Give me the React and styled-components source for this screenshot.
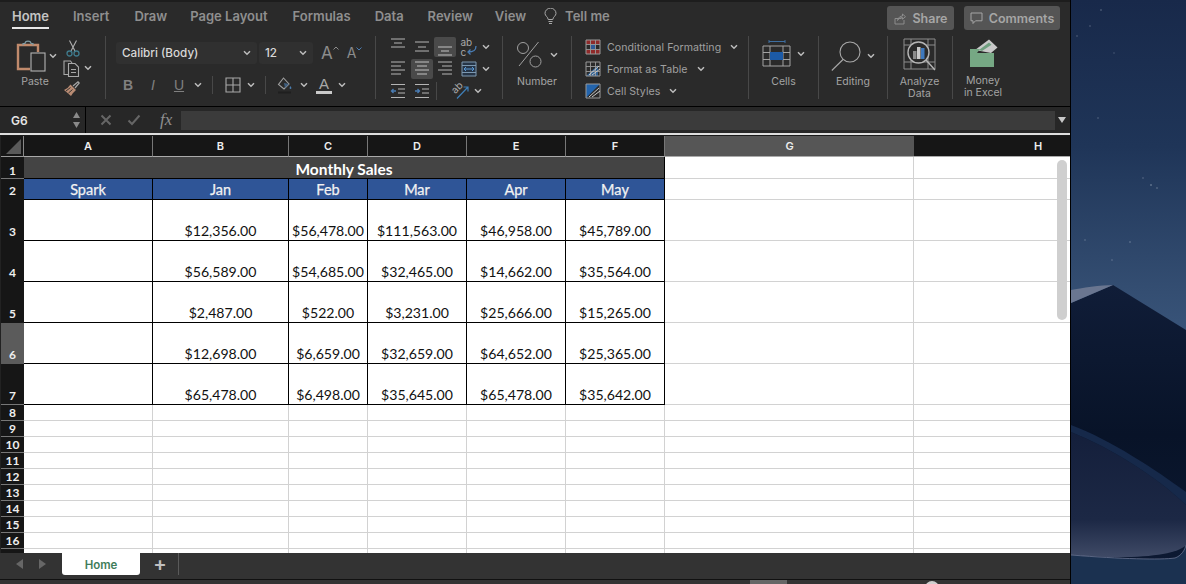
import React from "react";
import styled, { createGlobalStyle } from "styled-components";

const Global = createGlobalStyle`
  html, body { margin: 0; padding: 0; background: #0d1a30; overflow: hidden; }
  #root { width: 1186px; height: 584px; }
`;

const UI = `Inter, "Liberation Sans", sans-serif`;
const SHEET = `Lato, "Open Sans", sans-serif`;

const Screen = styled.div`display: flex; width: 1186px; height: 584px; overflow: hidden;`;
const ExcelWindow = styled.div`
  width: 1071px; height: 584px; flex: none; display: flex; flex-direction: column;
  border-right: 1px solid #000; box-sizing: border-box; background: #2a2a2a; font-family: ${UI};
`;
const Desktop = styled.div`flex: 1; height: 584px; line-height: 0;`;

const TabBar = styled.div`
  height: 33px; box-sizing: border-box; border-top: 2px solid #1d1d1d; flex: none;
  display: flex; align-items: flex-start; padding-left: 12px; position: relative;
`;
const Tab = styled.div`
  font-size: 13px; font-weight: 600; color: ${p => (p.$active ? "#c4c4c4" : "#8f8f8f")};
  margin-right: ${p => p.$gap || 25}px; height: 22px; line-height: 22px; margin-top: 3px;
  box-sizing: content-box; border-bottom: ${p => (p.$active ? "2px solid #e8e8e8" : "2px solid transparent")};
  white-space: nowrap;
`;
const TellMe = styled.div`
  display: flex; align-items: center; gap: 8px; font-size: 13px; font-weight: 600; color: #8f8f8f;
  height: 22px; margin-top: 3px;
`;
const ActionArea = styled.div`margin-left: auto; display: flex; gap: 10px; padding: 4px 10px 0 0;`;
const ActionButton = styled.div`
  height: 24px; width: ${p => p.$w}px; box-sizing: border-box; background: #555; border-radius: 3px;
  color: #a6a6a6; font-size: 12.5px; font-weight: 600; display: flex; align-items: center;
  justify-content: center; gap: 6px;
`;

const Ribbon = styled.div`
  height: 74px; box-sizing: border-box; flex: none; display: flex; padding: 3px 0 8px;
  border-bottom: 1px solid #000;
`;
const Group = styled.div`
  width: ${p => p.$w}px; flex: none; box-sizing: border-box; height: 63px;
  border-right: ${p => (p.$plain ? "none" : "1px solid #484848")};
  display: ${p => p.$flex || "block"};
  padding: ${p => p.$pad || 0};
`;
const LabelGroup = styled(Group)`
  display: flex; flex-direction: column; align-items: center; position: relative;
`;
const GroupIconRow = styled.div`
  display: flex; align-items: center; gap: ${p => p.$gap ?? 5}px; height: ${p => p.$h || 36}px;
  margin-top: ${p => p.$top ?? 3}px;
`;
const RibbonLabel = styled.div`
  color: #a4a4a4; font-size: 10.5px; line-height: 12px; text-align: center; margin-top: ${p => p.$top || 0}px;
`;
const PasteCol = styled.div`display: flex; flex-direction: column; align-items: center; width: 38px; margin-top: 4px;`;
const PasteTop = styled.div`display: flex; align-items: center; gap: 3px; height: 32px; margin-bottom: 4px; width: 38px;`;
const ToolCol = styled.div`display: flex; flex-direction: column; margin-left: 9px; margin-top: 2px;`;
const ToolRow = styled.div`display: flex; align-items: center; gap: 4px; height: 21px;`;

const FontRow = styled.div`display: flex; align-items: center; height: 22px; margin-top: ${p => p.$top}px;`;
const SelectBox = styled.div`
  width: ${p => p.$w}px; height: 22px; box-sizing: border-box; background: #303030; border-radius: 3px;
  margin-right: 2px; display: flex; align-items: center; justify-content: space-between;
  padding: 0 6px; color: #d8d8d8; font-size: 11.7px; font-weight: 500;
`;
const GrowLetter = styled.span`
  font-size: ${p => p.$s}px; color: #8c8c8c; line-height: 1; margin-left: ${p => p.$l}px; position: relative;
  & > svg { position: absolute; left: 100%; top: 1px; }
`;
const FormatLetter = styled.span`
  font-size: 14px; width: ${p => p.$w || 16}px; text-align: center; color: #808080;
  font-weight: ${p => (p.$b ? 700 : 400)}; font-style: ${p => (p.$i ? "italic" : "normal")};
  text-decoration: ${p => (p.$u ? "underline" : "none")}; margin-left: ${p => p.$l || 0}px;
  font-family: "Liberation Sans", sans-serif;
`;
const ColorGlyph = styled.span`
  width: 16px; height: 17px; box-sizing: border-box; text-align: center; font-size: 15px; line-height: 14px; color: #a8a8a8;
  border-bottom: 3.5px solid #c9c9c9; font-family: "Liberation Sans", sans-serif; flex: none;
`;
const FontSep = styled.div`width: 1px; height: 18px; background: #484848; margin: 0 ${p => p.$r || 12}px 0 ${p => p.$l || 10}px;`;
const Spacer = styled.div`width: ${p => p.$w}px; flex: none;`;

const AlignGrid = styled.div`
  display: grid; grid-template-columns: repeat(3, 22px) 1fr; column-gap: 1.5px; row-gap: 2px;
  grid-auto-rows: 20px; padding: 1px 0 0 11px;
`;
const AlignCell = styled.div`
  display: flex; align-items: center; justify-content: center; border-radius: 2px;
  background: ${p => (p.$on ? "#4a4a4a" : "transparent")};
`;
const WideCell = styled(AlignCell)`justify-content: flex-start; padding-left: 3px; gap: 5px;`;
const OrientCell = styled.div`
  grid-column: 3 / span 2; display: flex; align-items: center; gap: 4px; padding-left: 2px;
  & > b { width: 1px; height: 18px; background: #484848; margin-right: 10px; }
`;
const WrapGlyph = styled.div`
  width: 16px; height: 20px; flex: none; position: relative; font-size: 10px; line-height: 10px; color: #a8a8a8;
  & > span { display: block; }
  & > svg { position: absolute; left: 0; top: 0; }
`;
const OrientGlyph = styled.div`
  width: 19px; height: 18px; flex: none; position: relative;
  & > span { position: absolute; left: 0; top: 0; font-size: 10px; line-height: 11px; color: #a8a8a8; transform: rotate(-45deg); }
  & > svg { position: absolute; left: 0; top: 0; }
`;

const StyleRow = styled.div`
  display: flex; align-items: center; gap: 6px; height: 22px; color: #a0a0a0; font-size: 10.6px; letter-spacing: 0.05px;
  white-space: nowrap;
`;
const StyleRows = styled.div`padding: 0 0 0 13px;`;
const TextChevron = styled.span`display: inline-flex; margin-left: 3px;`;

const FormulaBar = styled.div`
  height: 26px; flex: none; box-sizing: border-box; background: #272727; display: flex; align-items: center;
`;
const NameBox = styled.div`
  width: 86px; height: 26px; box-sizing: border-box; padding: 0 4px 0 11px; flex: none;
  display: flex; align-items: center; justify-content: space-between;
  border-right: 1px solid #000; color: #e6e6e6; font-size: 12px; font-weight: 600;
`;
const FormulaTools = styled.div`
  display: flex; align-items: center; width: 95px; box-sizing: border-box; padding-left: 14px; gap: 15px; flex: none;
`;
const Fx = styled.span`font-family: "Liberation Serif", serif; font-style: italic; font-size: 17px; color: #8f8f8f; margin-left: 4px;`;
const FormulaInput = styled.div`width: 874px; height: 19px; background: #3b3b3b; flex: none;`;
const DropArrow = styled.div`
  width: 0; height: 0; margin-left: 3px; border-left: 4px solid transparent; border-right: 4px solid transparent;
  border-top: 6px solid #c8c8c8;
`;
const WhiteRule = styled.div`
  height: 3px; flex: none; background: #1a1a1a; border-top: 2px solid #dedede; box-sizing: border-box;
`;

const SheetWrap = styled.div`height: 417px; flex: none; overflow: hidden; position: relative; background: #fff;`;
const Grid = styled.div`
  display: grid; grid-template-columns: 23px 129px 136px 79px 99px 99px 99px 249px 248px;
  grid-template-rows: 21px 22px 21px repeat(5, 41px) repeat(10, 16px);
  border-left: 1px solid #222; width: max-content;
`;
const Corner = styled.div`
  background: #161616; border-right: 1px solid #888; border-bottom: 1px solid #999;
  position: relative; box-sizing: border-box;
  &::after { content: ""; position: absolute; right: 2px; bottom: 2px; width: 0; height: 0;
    border-left: 15px solid transparent; border-bottom: 15px solid #5a5a5a; }
`;
const ColHead = styled.div`
  background: ${p => (p.$on ? "#565656" : "#161616")}; color: #eee; box-sizing: border-box;
  font-size: 11px; font-weight: 600; display: flex; align-items: center; justify-content: center;
  border-right: ${p => (p.$none ? "none" : "1px solid #777")}; border-bottom: 1px solid #aaa;
`;
const RowHead = styled.div`
  background: ${p => (p.$on ? "#5b5b5b" : "#161616")}; color: #eee; box-sizing: border-box;
  font-family: ${SHEET}; font-size: 12px; font-weight: 700; display: flex; align-items: flex-end;
  justify-content: center; line-height: 14px;
  border-bottom: 1px solid ${p => (p.$line ? "#777" : "transparent")};
  padding-bottom: ${p => (p.$tall ? 1 : 0)}px;
`;
const Cell = styled.div`
  box-sizing: border-box; border-right: 1px solid #d2d2d2; border-bottom: 1px solid #d2d2d2; background: #fff;
`;
const TitleCell = styled.div`
  grid-column: span 6; background: #444; color: #fff; font-family: ${SHEET}; font-weight: 700; font-size: 15.5px;
  display: flex; align-items: center; justify-content: center; box-sizing: border-box; padding-top: 2px;
  border-right: 1px solid #000; border-bottom: 1px solid #000;
`;
const HeadCell = styled.div`
  background: #2f5597; color: #f2f2f2; font-family: ${SHEET}; font-size: 14.5px; -webkit-text-stroke: 0.25px #f2f2f2;
  display: flex; align-items: center; justify-content: center; box-sizing: border-box;
  border-right: 1px solid #000; border-bottom: 1px solid #000;
`;
const ValueCell = styled.div`
  background: #fff; color: #111; font-family: ${SHEET}; font-size: 14.1px; box-sizing: border-box;
  display: flex; align-items: flex-end; justify-content: center; line-height: 18px; white-space: nowrap;
  border-right: 1px solid #000; border-bottom: 1px solid #000;
`;
const ScrollThumb = styled.div`
  position: absolute; left: 1057px; top: 24px; width: 10px; height: 160px; background: #cfcfcf; border-radius: 5px;
`;

const SheetBar = styled.div`
  height: 26px; flex: none; background: #333; box-sizing: border-box; display: flex; align-items: flex-start;
`;
const NavArrows = styled.div`display: flex; align-items: center; gap: 16px; width: 62px; height: 22px; padding-left: 16px; box-sizing: border-box;`;
const Arrow = styled.div`
  width: 0; height: 0; border-top: 5px solid transparent; border-bottom: 5px solid transparent;
  ${p => (p.$left ? "border-right: 7px solid #666;" : "border-left: 7px solid #666;")}
`;
const SheetTab = styled.div`
  width: 78px; height: 22px; background: #fff; border-radius: 0 0 3px 3px; color: #3f7d5a; font-size: 11.5px;
  font-weight: 600; display: flex; align-items: center; justify-content: center; padding-top: 2px; box-sizing: border-box;
`;
const AddSheet = styled.div`
  width: 39px; height: 22px; box-sizing: border-box; border-right: 1px solid #5a5a5a; color: #c0c0c0; font-size: 20px;
  font-weight: 600; display: flex; align-items: center; justify-content: center; line-height: 1; padding-left: 2px;
`;
const StatusStrip = styled.div`
  flex: 1; background: #333; border-top: 1px solid #111; position: relative; min-height: 0; overflow: hidden;
`;
const ZoomChip = styled.div`position: absolute; left: 750px; top: 0; width: 37px; height: 4px; background: #666;`;
const ZoomKnob = styled.div`
  position: absolute; left: 925px; top: 1px; width: 14px; height: 14px; border-radius: 50%; background: #cfcfcf;
`;

const Chev = ({ c = "#bdbdbd" }) => (
  <svg width="8" height="6" viewBox="0 0 8 6" style={{ flex: "none" }}>
    <path d="M1 1.2 L4 4.2 L7 1.2" fill="none" stroke={c} strokeWidth="1.5" />
  </svg>
);
const Caret = ({ c, up }) => (
  <svg width="6" height="4" viewBox="0 0 6 4">
    <path d={up ? "M0.5 3.5L3 1L5.5 3.5" : "M0.5 0.5L3 3L5.5 0.5"} fill="none" stroke={c} strokeWidth="1" />
  </svg>
);

const Paste = () => (
  <svg width="30" height="32" viewBox="0 0 30 32" style={{ flex: "none" }}>
    <path d="M14 29H2V5H22V12" fill="none" stroke="#c08a6c" strokeWidth="2.4" />
    <path d="M7 5.5V3.5H9C9 0.3 15 0.3 15 3.5H17V5.5" fill="none" stroke="#7d9aa2" strokeWidth="1.1" />
    <rect x="15" y="13" width="14" height="18" fill="#2a2a2a" stroke="#b3b3b3" strokeWidth="1.1" />
  </svg>
);
const Scissors = () => (
  <svg width="14" height="17" viewBox="0 0 14 17" style={{ marginLeft: 3 }}>
    <path d="M3.5 0.5 L9 11 M10.5 0.5 L5 11" stroke="#b0b0b0" strokeWidth="1.1" fill="none" />
    <circle cx="3.5" cy="13.5" r="2.5" fill="none" stroke="#3f7a8c" strokeWidth="1.3" />
    <circle cx="10.5" cy="13.5" r="2.5" fill="none" stroke="#3f7a8c" strokeWidth="1.3" />
  </svg>
);
const Copy = () => (
  <svg width="17" height="17" viewBox="0 0 17 17">
    <path d="M5 14.5H1V1H7.5L9 3" fill="none" stroke="#a8a8a8" strokeWidth="1.1" />
    <path d="M5.5 3.5H12L15.5 7V16.5H5.5Z" fill="#2a2a2a" stroke="#a8a8a8" strokeWidth="1.1" />
    <path d="M8 9.5H13M8 12.5H13" stroke="#a8a8a8" strokeWidth="1" />
  </svg>
);
const Brush = () => (
  <svg width="17" height="16" viewBox="0 0 17 16">
    <path d="M10 5 L15 0.8 L16.2 2 L12 7" fill="none" stroke="#a8a8a8" strokeWidth="1.2" />
    <path d="M7.5 3.5 L13 9 L10 12 L8 15 L1 9 L4.5 7Z" fill="#b88b73" />
    <path d="M3 10 L7.5 6.5 M5.5 12 L9.5 8.5" stroke="#2a2a2a" strokeWidth="0.9" />
  </svg>
);
const Borders = () => (
  <svg width="16" height="16" viewBox="0 0 16 16">
    <path d="M1 1H15V15H1ZM8 1V15M1 8H15" fill="none" stroke="#a8a8a8" strokeWidth="1.1" />
  </svg>
);
const Fill = () => (
  <svg width="16" height="17" viewBox="0 0 16 17">
    <path d="M6.5 1 L12 7 L7 12 L1.5 7.5Z" fill="none" stroke="#a0a0a0" strokeWidth="1.1" />
    <path d="M7 6 L12 7 L8 11Z" fill="#3f5f80" />
    <path d="M13.5 9c1.2 1.6 1.2 3 0 3s-1.2-1.4 0-3" fill="#4a7db0" />
    <rect x="1" y="14.5" width="13" height="2" fill="#1f1f1f" />
  </svg>
);
const Lines = ({ rows, hi }) => (
  <svg width="16" height="20" viewBox="0 0 16 20" style={{ flex: "none" }}>
    {rows.map(([x1, x2, y], i) => (
      <line key={i} x1={x1} x2={x2} y1={y} y2={y} stroke={hi ? "#c2c2c2" : "#b5b5b5"} strokeWidth="1" />
    ))}
  </svg>
);
const Indent = ({ out }) => (
  <svg width="16" height="16" viewBox="0 0 16 16">
    <path d="M1 1.5H15M1 14.5H15M8 6H15M8 10H15" stroke="#b5b5b5" strokeWidth="1" fill="none" />
    <path d={out ? "M6 8H1.5M3.5 6L1.5 8L3.5 10" : "M1 8H5.5M3.5 6L5.5 8L3.5 10"} stroke="#4a7db5" strokeWidth="1.3" fill="none" />
  </svg>
);
const WrapIcon = () => (
  <WrapGlyph>
    <span>ab</span>
    <span>c</span>
    <svg width="16" height="20" viewBox="0 0 16 20">
      <path d="M15 9C15 14 12 15 7 15M9.5 12.5L7 15L9.5 17.5" fill="none" stroke="#4a7db5" strokeWidth="1.3" />
    </svg>
  </WrapGlyph>
);
const MergeIcon = () => (
  <svg width="16" height="16" viewBox="0 0 16 16">
    <path d="M1 1H15V15H1ZM1 4.5H15M1 11.5H15" fill="#263547" stroke="#7c98b0" strokeWidth="1" />
    <path d="M3 8H13M5 6L3 8L5 10M11 6L13 8L11 10" fill="none" stroke="#5b9bd8" strokeWidth="1" />
  </svg>
);
const Orient = () => (
  <OrientGlyph>
    <span>ab</span>
    <svg width="19" height="18" viewBox="0 0 19 18">
      <path d="M6 16.5L17 5M12.5 5H17V9.5" fill="none" stroke="#3f7fb8" strokeWidth="1.2" />
    </svg>
  </OrientGlyph>
);
const Percent = () => (
  <svg width="26" height="28" viewBox="0 0 26 28" style={{ flex: "none" }}>
    <circle cx="7" cy="7" r="5.5" fill="none" stroke="#a0a0a0" strokeWidth="1" />
    <circle cx="19.5" cy="20.5" r="5.5" fill="none" stroke="#a0a0a0" strokeWidth="1" />
    <path d="M3 25L22.5 1" stroke="#a0a0a0" strokeWidth="1" />
  </svg>
);
const StyleIcon = ({ kind }) => (
  <svg width="16" height="16" viewBox="0 0 16 16" style={{ flex: "none" }}>
    {kind === "cond" && <path d="M1 1H15V5H1ZM1 11H15V15H1Z" fill="#8f2a2a" />}
    {kind === "cond" && <rect x="5.5" y="5" width="5" height="6" fill="#2f5a98" />}
    {kind === "table" && <path d="M1 15L13 4V15Z" fill="#2e5f92" />}
    {kind === "cell" && <path d="M1 1H15L1 15Z" fill="#2364ac" />}
    <path d="M1 1H15V15H1Z" fill="none" stroke="#999" strokeWidth="1" />
    {kind !== "cell" && <path d="M1 5.5H15M1 10.5H15M5.5 1V15M10.5 1V15" stroke="#999" strokeWidth="0.9" fill="none" />}
    {kind !== "cond" && <path d="M4 14L14 5M7 14L15 8" stroke="#c8c8c8" strokeWidth="1" fill="none" />}
  </svg>
);
const CellsIcon = () => (
  <svg width="29" height="27" viewBox="0 0 29 27" style={{ flex: "none" }}>
    <path d="M7 1.5H23M7 0V3M23 0V3" stroke="#3e6ea0" strokeWidth="1" fill="none" />
    <path d="M1 6H28V26H1ZM1 12.5H28M1 19.5H28M8 6V26M21 6V26" fill="none" stroke="#a2a2a2" strokeWidth="1" />
    <rect x="8" y="12" width="13" height="8" fill="#1c5aa6" />
  </svg>
);
const Magnifier = () => (
  <svg width="30" height="30" viewBox="0 0 30 30" style={{ flex: "none" }}>
    <circle cx="19" cy="11" r="10" fill="none" stroke="#a8a8a8" strokeWidth="1.1" />
    <path d="M12 18.5L0.8 29.5" stroke="#a8a8a8" strokeWidth="1.1" />
  </svg>
);
const AnalyzeIcon = () => (
  <svg width="33" height="33" viewBox="0 0 33 33" style={{ flex: "none" }}>
    <path d="M1 1H32V31H1ZM1 7H32M8 1V31M25 1V31M1 24H32" fill="none" stroke="#8c8c8c" strokeWidth="1" />
    <circle cx="15.5" cy="14.5" r="10.5" fill="#2a2a2a" stroke="#b5b5b5" strokeWidth="1.4" />
    <rect x="10" y="13" width="3.5" height="8" fill="#8a8a8a" />
    <rect x="14" y="9" width="3.5" height="12" fill="#c8c8c8" />
    <rect x="18" y="10" width="3.5" height="11" fill="#3d78bd" />
    <path d="M23 22L32 32" stroke="#b5b5b5" strokeWidth="1.4" />
  </svg>
);
const MoneyIcon = () => (
  <svg width="29" height="29" viewBox="0 0 29 29" style={{ flex: "none" }}>
    <path d="M6 11L20 0.5L28.5 8.5L22 14Z" fill="#c9c9c9" />
    <path d="M10 11L20 3.5L22.5 5.8L13 12Z" fill="#6f9f7f" />
    <path d="M1 10H11L8 14H25V28H1Z" fill="#76a884" />
  </svg>
);
const ShareIcon = () => (
  <svg width="13" height="13" viewBox="0 0 13 13">
    <path d="M8.5 6.5H2V12H11V8" fill="none" stroke="#8c8c8c" strokeWidth="1" />
    <path d="M4.5 8.5C5 5.5 7.5 4 9.5 4V2L12.5 4.7L9.5 7.2V5.5C7.5 5.5 5.8 6.5 4.5 8.5Z" fill="none" stroke="#8c8c8c" strokeWidth="1" />
  </svg>
);
const CommentIcon = () => (
  <svg width="13" height="13" viewBox="0 0 13 13">
    <path d="M1 1H12V8.8H5.5L3 11.5V8.8H1Z" fill="none" stroke="#a6a6a6" strokeWidth="1" />
  </svg>
);
const Bulb = () => (
  <svg width="13" height="17" viewBox="0 0 13 17">
    <path d="M4.2 11.5C4 8.8 1 8 1 5.4A5.4 5.2 0 0 1 12 5.4C12 8 9 8.8 8.8 11.5Z" fill="none" stroke="#a8a8a8" strokeWidth="1" />
    <path d="M4.5 13.5H8.5M5 15.5H8" stroke="#a8a8a8" strokeWidth="1" />
  </svg>
);
const Stepper = () => (
  <svg width="9" height="18" viewBox="0 0 9 18">
    <path d="M4.5 1L8 7H1Z" fill="#8a8a8a" />
    <path d="M4.5 17L8 11H1Z" fill="#8a8a8a" />
  </svg>
);
const CrossIcon = () => (
  <svg width="12" height="12" viewBox="0 0 12 12">
    <path d="M1.5 1.5L10.5 10.5M10.5 1.5L1.5 10.5" stroke="#666" strokeWidth="2" />
  </svg>
);
const CheckIcon = () => (
  <svg width="14" height="12" viewBox="0 0 14 12">
    <path d="M1.5 6.5L5 10L12.5 1.5" fill="none" stroke="#666" strokeWidth="2" />
  </svg>
);

const DesktopArt = () => (
  <svg width="115" height="584" viewBox="0 0 115 584" preserveAspectRatio="none">
    <defs>
      <linearGradient id="sky" x1="0" y1="0" x2="0" y2="1">
        <stop offset="0" stopColor="#18294a" />
        <stop offset="0.25" stopColor="#1f3558" />
        <stop offset="0.5" stopColor="#344e72" />
        <stop offset="0.6" stopColor="#3a567c" />
      </linearGradient>
      <linearGradient id="dune" x1="0" y1="0" x2="0" y2="1">
        <stop offset="0" stopColor="#101d38" />
        <stop offset="0.5" stopColor="#081328" />
        <stop offset="1" stopColor="#0d1a34" />
      </linearGradient>
      <linearGradient id="lower" x1="0" y1="0" x2="0" y2="1">
        <stop offset="0" stopColor="#141f3b" />
        <stop offset="0.7" stopColor="#1c2845" />
        <stop offset="1" stopColor="#3f4a66" />
      </linearGradient>
    </defs>
    <rect width="115" height="584" fill="url(#sky)" />
    {[[30,10,0.5],[19,26,0.4],[6,36,0.4],[43,53,0.3],[27,118,0.4],[80,185,0.7],[86,188,0.5],[72,178,0.4],[59,242,0.5],[14,240,0.4],[41,260,0.4]].map(([x,y,o],i)=>(
      <circle key={i} cx={x} cy={y} r="0.7" fill="#cfd8e6" opacity={o} />
    ))}
    <path d="M0 303L42 285L115 330V584H0Z" fill="url(#dune)" />
    <path d="M0 303L42 285C30 285 10 288 0 290Z" fill="#6a7690" />
    <path d="M0 432C40 448 85 476 115 505V545C105 556 60 560 0 555Z" fill="url(#lower)" />
    <path d="M0 425C40 440 85 470 115 492V505C85 476 40 448 0 432Z" fill="#16294a" />
    <path d="M0 555C50 559 90 560 104 558C110 556 114 550 115 545V584H0Z" fill="#1b3150" />
    <path d="M0 555C50 559 90 560 104 558C110 556 114 550 115 545" fill="none" stroke="#6a7390" strokeWidth="0.8" />
  </svg>
);

const columns = ["A", "B", "C", "D", "E", "F", "G", "H"];
const months = ["Spark", "Jan", "Feb", "Mar", "Apr", "May"];
const data = [
  ["$12,356.00", "$56,478.00", "$111,563.00", "$46,958.00", "$45,789.00"],
  ["$56,589.00", "$54,685.00", "$32,465.00", "$14,662.00", "$35,564.00"],
  ["$2,487.00", "$522.00", "$3,231.00", "$25,666.00", "$15,265.00"],
  ["$12,698.00", "$6,659.00", "$32,659.00", "$64,652.00", "$25,365.00"],
  ["$65,478.00", "$6,498.00", "$35,645.00", "$65,478.00", "$35,642.00"],
];
const tabs = [["Home", 24], ["Insert", 25], ["Draw", 23], ["Page Layout", 25], ["Formulas", 24], ["Data", 24], ["Review", 22], ["View", 18]];

const L = {
  top: [[1, 15, 2], [4, 12, 6], [1, 15, 10]],
  mid: [[1, 15, 5], [4, 12, 10], [1, 15, 14]],
  bot: [[1, 15, 10], [4, 12, 14], [1, 15, 18]],
  l: [[1, 15, 3], [1, 11, 7], [1, 15, 11], [1, 11, 15]],
  c: [[1, 15, 3], [3, 13, 7], [1, 15, 11], [3, 13, 15]],
  r: [[1, 15, 3], [5, 15, 7], [1, 15, 11], [5, 15, 15]],
};

export default function App() {
  return (
    <Screen>
      <Global />
      <ExcelWindow>
        <TabBar>
          {tabs.map(([t, g], i) => (
            <Tab key={t} $active={i === 0} $gap={g}>{t}</Tab>
          ))}
          <TellMe><Bulb />Tell me</TellMe>
          <ActionArea>
            <ActionButton $w={67}><ShareIcon />Share</ActionButton>
            <ActionButton $w={96}><CommentIcon />Comments</ActionButton>
          </ActionArea>
        </TabBar>

        <Ribbon>
          <Group $w={106} $flex="flex" $pad="0 0 0 16px">
            <PasteCol>
              <PasteTop><Paste /><Chev /></PasteTop>
              <RibbonLabel>Paste</RibbonLabel>
            </PasteCol>
            <ToolCol>
              <ToolRow><Scissors /></ToolRow>
              <ToolRow><Copy /><Chev /></ToolRow>
              <ToolRow><Brush /></ToolRow>
            </ToolCol>
          </Group>

          <Group $w={270} $pad="0 0 0 10px">
            <FontRow $top={6}>
              <SelectBox $w={141}>Calibri (Body)<Chev /></SelectBox>
              <SelectBox $w={54}>12<Chev /></SelectBox>
              <GrowLetter $s={17} $l={6}>A<Caret c="#8c8c8c" up /></GrowLetter>
              <GrowLetter $s={14} $l={14}>A<Caret c="#4a7db5" /></GrowLetter>
            </FontRow>
            <FontRow $top={10}>
              <FormatLetter $b $l={4}>B</FormatLetter>
              <FormatLetter $i $l={9}>I</FormatLetter>
              <FormatLetter $u $l={10}>U</FormatLetter>
              <Spacer $w={7} /><Chev />
              <FontSep $l={10} $r={12} />
              <Borders />
              <Spacer $w={6} /><Chev />
              <FontSep $l={10} $r={11} />
              <Fill />
              <Spacer $w={7} /><Chev />
              <Spacer $w={8} /><ColorGlyph>A</ColorGlyph>
              <Spacer $w={6} /><Chev />
            </FontRow>
          </Group>

          <Group $w={127}>
            <AlignGrid>
              <AlignCell><Lines rows={L.top} /></AlignCell>
              <AlignCell><Lines rows={L.mid} /></AlignCell>
              <AlignCell $on><Lines rows={L.bot} hi /></AlignCell>
              <WideCell><WrapIcon /><Chev /></WideCell>
              <AlignCell><Lines rows={L.l} /></AlignCell>
              <AlignCell $on><Lines rows={L.c} hi /></AlignCell>
              <AlignCell><Lines rows={L.r} /></AlignCell>
              <WideCell><MergeIcon /><Chev /></WideCell>
              <AlignCell><Indent out /></AlignCell>
              <AlignCell><Indent /></AlignCell>
              <OrientCell><b /><Orient /><Chev /></OrientCell>
            </AlignGrid>
          </Group>

          <LabelGroup $w={69}>
            <GroupIconRow $top={5} $h={28} $gap={8}>
              <Percent /><Chev />
            </GroupIconRow>
            <RibbonLabel $top={7}>Number</RibbonLabel>
          </LabelGroup>

          <Group $w={177}>
            <StyleRows>
              <StyleRow><StyleIcon kind="cond" />Conditional Formatting<TextChevron><Chev /></TextChevron></StyleRow>
              <StyleRow><StyleIcon kind="table" />Format as Table<TextChevron><Chev /></TextChevron></StyleRow>
              <StyleRow><StyleIcon kind="cell" />Cell Styles<TextChevron><Chev /></TextChevron></StyleRow>
            </StyleRows>
          </Group>

          <LabelGroup $w={70}>
            <GroupIconRow $top={2} $h={31} $gap={6}>
              <CellsIcon /><Chev />
            </GroupIconRow>
            <RibbonLabel $top={7}>Cells</RibbonLabel>
          </LabelGroup>

          <LabelGroup $w={69}>
            <GroupIconRow $top={4} $h={31} $gap={6}>
              <Magnifier /><Chev />
            </GroupIconRow>
            <RibbonLabel $top={5}>Editing</RibbonLabel>
          </LabelGroup>

          <LabelGroup $w={65} $pad="0 1px 0 0">
            <GroupIconRow $top={2} $h={33}><AnalyzeIcon /></GroupIconRow>
            <RibbonLabel $top={5}>Analyze<br />Data</RibbonLabel>
          </LabelGroup>

          <LabelGroup $w={60} $plain>
            <GroupIconRow $top={2} $h={32}><MoneyIcon /></GroupIconRow>
            <RibbonLabel $top={6}>Money<br />in Excel</RibbonLabel>
          </LabelGroup>
        </Ribbon>

        <FormulaBar>
          <NameBox>G6<Stepper /></NameBox>
          <FormulaTools><CrossIcon /><CheckIcon /><Fx>fx</Fx></FormulaTools>
          <FormulaInput />
          <DropArrow />
        </FormulaBar>
        <WhiteRule />

        <SheetWrap>
          <Grid>
            <Corner />
            {columns.map(c => (
              <ColHead key={c} $on={c === "G"} $none={c === "G" || c === "H"}>{c}</ColHead>
            ))}

            <RowHead $line>1</RowHead>
            <TitleCell>Monthly Sales</TitleCell>
            <Cell /><Cell />

            <RowHead $tall>2</RowHead>
            {months.map(m => <HeadCell key={m}>{m}</HeadCell>)}
            <Cell /><Cell />

            {data.map((row, i) => (
              <React.Fragment key={i}>
                <RowHead $on={i === 3} $tall $line={i === 4}>{i + 3}</RowHead>
                <ValueCell />
                {row.map((v, j) => <ValueCell key={j}>{v}</ValueCell>)}
                <Cell /><Cell />
              </React.Fragment>
            ))}

            {Array.from({ length: 10 }, (_, i) => (
              <React.Fragment key={i}>
                <RowHead $line>{i + 8 <= 16 ? i + 8 : ""}</RowHead>
                {columns.map(c => <Cell key={c} />)}
              </React.Fragment>
            ))}
          </Grid>
          <ScrollThumb />
        </SheetWrap>

        <SheetBar>
          <NavArrows><Arrow $left /><Arrow /></NavArrows>
          <SheetTab>Home</SheetTab>
          <AddSheet>+</AddSheet>
        </SheetBar>
        <StatusStrip>
          <ZoomChip />
          <ZoomKnob />
        </StatusStrip>
      </ExcelWindow>
      <Desktop><DesktopArt /></Desktop>
    </Screen>
  );
}
